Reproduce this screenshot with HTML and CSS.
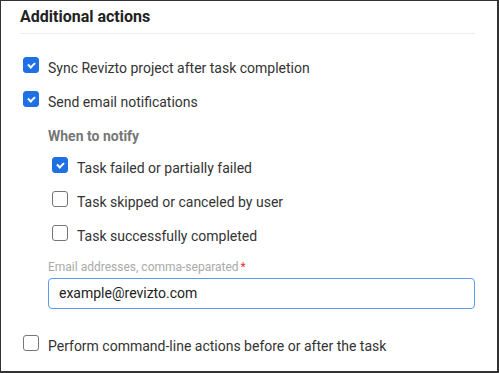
FILE: index.html
```html
<!doctype html>
<html>
  <head>
    <meta charset='utf-8'>
    <title>Additional actions</title>
    <link rel="stylesheet" href="styles.css">
  </head>
  <body>
    <div class="panel">
      <h2 class="title">Additional actions</h2>

      <div class="options">
        <label class="row">
          <span class="box checked"></span>
          <span class="text">Sync Revizto project after task completion</span>
        </label>
        <label class="row">
          <span class="box checked"></span>
          <span class="text">Send email notifications</span>
        </label>

        <div class="notify">
          <div class="subhead">When to notify</div>
          <label class="row">
            <span class="box checked"></span>
            <span class="text">Task failed or partially failed</span>
          </label>
          <label class="row">
            <span class="box"></span>
            <span class="text">Task skipped or canceled by user</span>
          </label>
          <label class="row">
            <span class="box"></span>
            <span class="text">Task successfully completed</span>
          </label>

          <div class="field">
            <div class="field-label">Email addresses, comma-separated<span class="req">*</span></div>
            <div class="input">example@revizto.com</div>
          </div>
        </div>

        <label class="row last">
          <span class="box"></span>
          <span class="text">Perform command-line actions before or after the task</span>
        </label>
      </div>
    </div>
  </body>
</html>
```

FILE: styles.css
```css
body {
  margin: 0;
  font-family: Roboto, 'Noto Sans', sans-serif;
  color: #333;
}

.panel {
  box-sizing: border-box;
  width: 499px;
  height: 373px;
  border: 1px solid #333;
  border-right-width: 2px;
  border-bottom-width: 2px;
  padding: 6px 22px 0 19px;
  background: #fff;
}

.title {
  margin: 0;
  padding-bottom: 6px;
  font-size: 16px;
  line-height: 20px;
  font-weight: 700;
  color: #222;
  border-bottom: 1px solid #eee;
}

.options {
  padding: 14px 0 0 3px;
}

.row {
  display: flex;
  align-items: center;
  height: 34px;
  cursor: pointer;
}

.box {
  box-sizing: border-box;
  flex: none;
  width: 16px;
  height: 16px;
  margin-right: 9px;
  border: 1.5px solid #777;
  border-radius: 3px;
  position: relative;
}

.box.checked {
  border-color: #1f6fe5;
  background: #1f6fe5;
}

.box.checked:after {
  content: "";
  position: absolute;
  left: 4.5px;
  top: 2.5px;
  width: 3px;
  height: 5px;
  border: solid #fff;
  border-width: 0 2px 2px 0;
  transform: rotate(45deg);
}

.text {
  font-size: 14px;
  padding-top: 6px;
}

.notify {
  padding-left: 25px;
}

.subhead {
  padding-top: 10px;
  margin-bottom: 2px;
  font-size: 14px;
  line-height: 20px;
  font-weight: 700;
  color: #777;
}

.notify .row {
  padding-left: 4px;
}

.field {
  padding-top: 9px;
}

.field-label {
  font-size: 12px;
  line-height: 16px;
  color: #aaa;
}

.req {
  color: #e53935;
  margin-left: 2px;
}

.input {
  box-sizing: border-box;
  height: 31px;
  margin-top: 3px;
  padding: 0 10px;
  border: 1.5px solid #5b9cf0;
  border-radius: 4px;
  font-size: 14px;
  line-height: 28px;
  color: #222;
}

.row.last {
  margin-top: 17px;
}
```
